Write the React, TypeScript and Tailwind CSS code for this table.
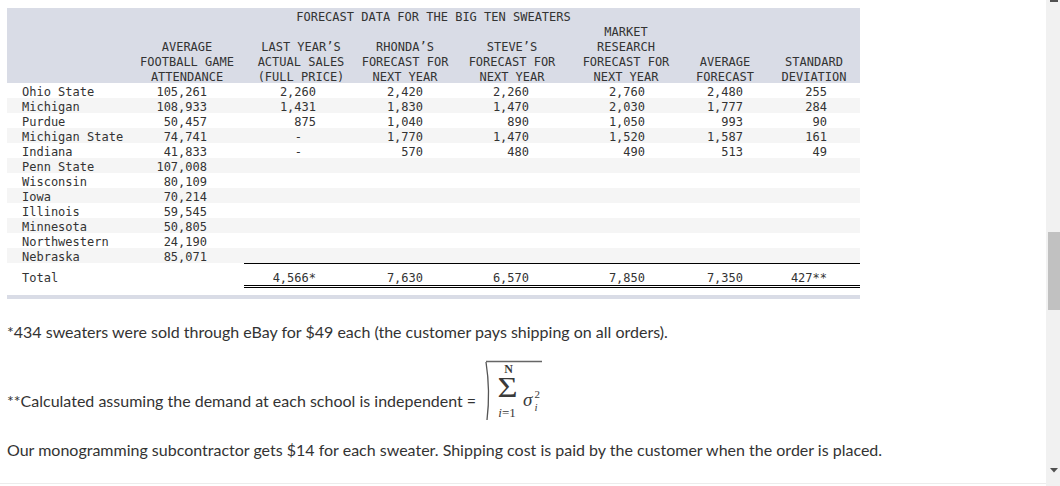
import React from 'react';

const cols = [
  { w: 'w-[128px] pl-[15px] text-left', head: [] as string[] },
  { w: 'w-[104px] pr-[32px] text-right', head: ['AVERAGE', 'FOOTBALL GAME', 'ATTENDANCE'] },
  { w: 'w-[124px] pr-[47px] text-right', head: ['LAST YEAR’S', 'ACTUAL SALES', '(FULL PRICE)'] },
  { w: 'w-[84px] pr-[24px] text-right', head: ['RHONDA’S', 'FORECAST FOR', 'NEXT YEAR'] },
  { w: 'w-[130px] pr-[48px] text-right', head: ['STEVE’S', 'FORECAST FOR', 'NEXT YEAR'] },
  { w: 'w-[98px] pr-[30px] text-right', head: ['MARKET', 'RESEARCH', 'FORECAST FOR', 'NEXT YEAR'] },
  { w: 'w-[100px] pr-[32px] text-right', head: ['AVERAGE', 'FORECAST'] },
  { w: 'w-[78px] pr-[26px] text-right', head: ['STANDARD', 'DEVIATION'] },
];

const headW = ['', 'w-[104px]', 'w-[124px]', 'w-[84px]', 'w-[130px]', 'w-[98px]', 'w-[100px]', 'w-[78px]'];

const rows: string[][] = [
  ['Ohio State', '105,261', '2,260', '2,420', '2,260', '2,760', '2,480', '255'],
  ['Michigan', '108,933', '1,431', '1,830', '1,470', '2,030', '1,777', '284'],
  ['Purdue', '50,457', '875', '1,040', '890', '1,050', '993', '90'],
  ['Michigan State', '74,741', '-', '1,770', '1,470', '1,520', '1,587', '161'],
  ['Indiana', '41,833', '-', '570', '480', '490', '513', '49'],
  ['Penn State', '107,008'],
  ['Wisconsin', '80,109'],
  ['Iowa', '70,214'],
  ['Illinois', '59,545'],
  ['Minnesota', '50,805'],
  ['Northwestern', '24,190'],
  ['Nebraska', '85,071'],
];

const totals = [
  { w: 'w-[119px] pr-[47px]', v: '4,566*' },
  { w: 'w-[84px] pr-[24px]', v: '7,630' },
  { w: 'w-[130px] pr-[48px]', v: '6,570' },
  { w: 'w-[98px] pr-[30px]', v: '7,850' },
  { w: 'w-[100px] pr-[32px]', v: '7,350' },
  { w: 'w-[78px] pr-[26px]', v: '427**' },
];

// sqrt( sum_{i=1}^{N} sigma_i^2 )
function SigmaFormula() {
  return (
    <svg width="60" height="62" viewBox="0 0 60 62" className="shrink-0">
      <path d="M2 2 Q6.5 31 3 60" fill="none" stroke="#555" strokeWidth="1.3" />
      <line x1="2" y1="1.5" x2="58" y2="1.5" stroke="#666" strokeWidth="1.6" />
      <g fill="#3a3a3a" fontFamily="'Liberation Serif', 'DejaVu Serif', serif">
        <text x="24.5" y="12.5" fontSize="12" fontWeight="bold" textAnchor="middle">N</text>
        <text x="23.5" y="37" fontSize="30" textAnchor="middle" transform="translate(23.5 0) scale(1.15 1) translate(-23.5 0)">Σ</text>
        <text x="23" y="57" fontSize="13" textAnchor="middle">
          <tspan fontStyle="italic">i</tspan>=1
        </text>
        <text x="39" y="46" fontSize="19" fontStyle="italic">σ</text>
        <text x="50.5" y="38" fontSize="11">2</text>
        <text x="50.5" y="51" fontSize="11" fontStyle="italic">i</text>
      </g>
    </svg>
  );
}

export default function App() {
  return (
    <div className="flex w-[1060px] h-[486px] overflow-hidden bg-white text-[#333]">
      <div className="flex-1 flex flex-col pl-[7px] pt-[8px]">
        <div className="w-[853px] font-['DejaVu_Sans_Mono','Liberation_Mono',monospace] text-[12px] leading-[15px] whitespace-nowrap">
          <div className="bg-[#d9dce6]">
            <div className="text-center h-[15px] pt-[2px]">FORECAST DATA FOR THE BIG TEN SWEATERS</div>
            <div className="flex items-end h-[60px]">
              <div className="w-[128px]" />
              {cols.slice(1).map((c, i) => (
                <div key={i} className={`${headW[i + 1]} flex flex-col items-center translate-y-[2px]`}>
                  {c.head.map((h) => (
                    <div key={h}>{h}</div>
                  ))}
                </div>
              ))}
            </div>
          </div>

          {rows.map((r, ri) => (
            <div key={r[0]} className={`flex h-[15px] pt-[2px] ${ri % 2 === 1 ? 'bg-[#f5f5f5]' : 'bg-white'}`}>
              {cols.map((c, ci) => (
                <div key={ci} className={c.w}>
                  {r[ci] === '-' ? <span className="block text-right pr-[14px]">-</span> : r[ci] ?? ''}
                </div>
              ))}
            </div>
          ))}

          <div className="flex leading-[14px]">
            <div className="w-[237px] pl-[15px] pt-[7px] border-t border-b-[3px] border-double border-transparent">Total</div>
            <div className="flex w-[616px] pt-[7px] border-t border-b-[3px] border-double border-black">
              {totals.map((t) => (
                <div key={t.v} className={`${t.w} text-right`}>{t.v}</div>
              ))}
            </div>
          </div>
          <div className="mt-[7px] h-[4px] bg-[#d9dce6]" />
        </div>

        <div className="font-['Lato','Liberation_Sans',sans-serif] text-[16px] leading-[20px]">
          <p className="mt-[23px]">*434 sweaters were sold through eBay for $49 each (the customer pays shipping on all orders).</p>
          <div className="flex items-start mt-[18px]">
            <span className="mt-[31px] mr-[8px]">**Calculated assuming the demand at each school is independent =</span>
            <SigmaFormula />
          </div>
          <p className="mt-[18px]">Our monogramming subcontractor gets $14 for each sweater. Shipping cost is paid by the customer when the order is placed.</p>
        </div>
        <div className="mt-auto mb-[2px] -ml-[7px] h-px bg-[#ececec]" />
      </div>

      <div className="w-[14px] bg-[#f1f1f1] flex flex-col items-center">
        <svg width="8" height="3" viewBox="0 0 8 3" className="ml-[1px]">
          <rect x="0" y="0" width="8" height="2" fill="#505050" />
        </svg>
        <div className="mt-[229px] ml-[2px] w-[12px] h-[78px] bg-[#c1c1c1]" />
        <svg width="8" height="5" viewBox="0 0 8 5" className="mt-[158px] ml-[1px]">
          <path d="M0 0 L8 0 L4 4.5 Z" fill="#505050" />
        </svg>
      </div>
    </div>
  );
}
